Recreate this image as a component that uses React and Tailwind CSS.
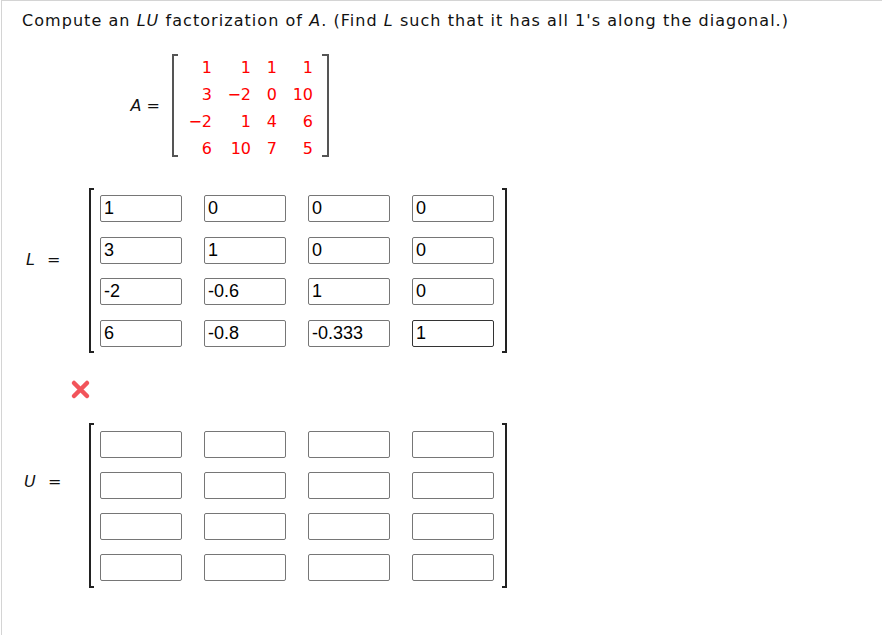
import React from "react";

const A = [
  ["1", "1", "1", "1"],
  ["3", "\u22122", "0", "10"],
  ["\u22122", "1", "4", "6"],
  ["6", "10", "7", "5"],
];

const L = [
  ["1", "0", "0", "0"],
  ["3", "1", "0", "0"],
  ["-2", "-0.6", "1", "0"],
  ["6", "-0.8", "-0.333", "1"],
];

const U = [
  ["", "", "", ""],
  ["", "", "", ""],
  ["", "", "", ""],
  ["", "", "", ""],
];

const colWidths = ["w-[34px]", "w-[39px]", "w-[26px]", "w-[36px]"];

// one answer box
const Cell = ({ value, focused }) => (
  <input
    type="text"
    readOnly
    value={value}
    className={`w-[82px] h-[27px] border ${
      focused ? "border-[#333]" : "border-[#767676]"
    } rounded-[2px] bg-white pl-[3px] text-[18px] text-black font-['Liberation_Sans',Arial,sans-serif] outline-none`}
  />
);

const AnswerMatrix = ({ label, labelOffset, rows, rowGap, padTop, padBottom, letterClass }) => (
  <div className="flex items-start">
    {/* Label */}
    <div className={`w-[87px] shrink-0 pl-[22px] flex items-center leading-[20px] ${labelOffset}`}>
      <i className={letterClass}>{label}</i>
      <span>=</span>
    </div>

    {/* Bracketed grid */}
    <div className="flex items-stretch">
      <div className="w-[5px] border-l-2 border-y-2 border-[#222]"></div>
      <div
        className={`grid grid-cols-[82px_82px_82px_82px] gap-x-[22px] ${rowGap} pl-[6px] pr-[8px] ${padTop} ${padBottom}`}
      >
        {rows.map((row, i) =>
          row.map((v, j) => (
            <Cell key={`${i}-${j}`} value={v} focused={label === "L" && i === 3 && j === 3} />
          ))
        )}
      </div>
      <div className="w-[5px] border-r-2 border-y-2 border-[#222]"></div>
    </div>
  </div>
);

const App = () => {
  return (
    <div className="min-h-screen bg-white">
      <div className="ml-px min-h-[635px] border-l border-t border-[#d4d4d4] text-[16px] text-[#111] font-['DejaVu_Sans',Verdana,sans-serif]">
        {/* Question */}
        <p className="pl-[20px] pt-[8px] leading-[24px] tracking-[1.05px]">
          Compute an <i>LU</i> factorization of <i>A</i>. (Find <i>L</i> such that it has
          all 1's along the diagonal.)
        </p>

        {/* Matrix A */}
        <div className="mt-[21px] flex items-center">
          <div className="w-[170px] shrink-0 pr-[12px] text-right">
            <i>A</i> =
          </div>
          <div className="flex items-stretch">
            <div className="w-[6px] border-l-2 border-y-2 border-[#555]"></div>
            <div className="grid grid-cols-[auto_auto_auto_auto] auto-rows-[27px] mb-[-5px] pr-[9px] text-[16px] leading-[27px] text-[#f00]">
              {A.map((row, i) =>
                row.map((v, j) => (
                  <div key={`${i}-${j}`} className={`${colWidths[j]} text-right`}>
                    {v}
                  </div>
                ))
              )}
            </div>
            <div className="w-[7px] border-r-2 border-y-2 border-[#555]"></div>
          </div>
        </div>

        {/* Matrix L */}
        <div className="mt-[31px]">
          <AnswerMatrix
            label="L"
            labelOffset="mt-[62px]"
            rows={L}
            rowGap="gap-y-[14.5px]"
            padTop="pt-[7px]"
            padBottom="pb-[6px]"
            letterClass="w-[23px] pl-[2px]"
          />
        </div>

        {/* Wrong answer mark */}
        <div className="mt-[26px] pl-[68px] h-[22px]">
          <svg width="21" height="21" viewBox="0 0 21 21">
            <path
              d="M4 4 L17 17 M17 4 L4 17"
              stroke="#f2545b"
              strokeWidth="4.5"
              strokeLinecap="round"
            />
          </svg>
        </div>

        {/* Matrix U */}
        <div className="mt-[22px]">
          <AnswerMatrix
            label="U"
            labelOffset="mt-[49px]"
            rows={U}
            rowGap="gap-y-[14px]"
            padTop="pt-[8px]"
            padBottom="pb-[7px]"
            letterClass="w-[24px]"
          />
        </div>
      </div>
    </div>
  );
};

export default App;
